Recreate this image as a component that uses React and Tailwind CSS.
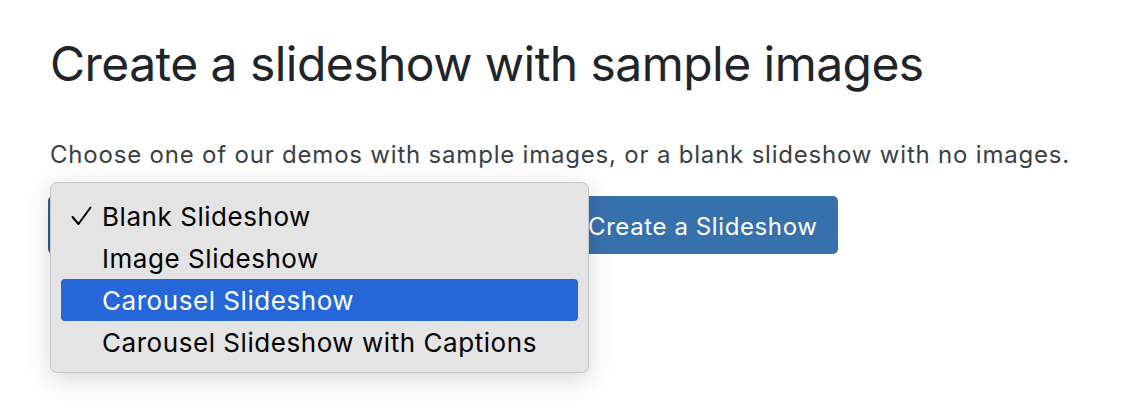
import React from "react";

const options = [
  "Blank Slideshow",
  "Image Slideshow",
  "Carousel Slideshow",
  "Carousel Slideshow with Captions",
];

const App = () => {
  return (
    <div
      className="w-[1146px] h-[412px] bg-white overflow-hidden px-[50px] pt-[34px] text-[#212529]"
      style={{ fontFamily: "Inter, 'Noto Sans', sans-serif" }}
    >
      <h1 className="text-[48px] leading-[60px] font-normal tracking-[-0.55px]">
        Create a slideshow with sample images
      </h1>
      <p className="mt-[45px] text-[24px] leading-[32px] tracking-[0.8px] text-[#3a3f44]">
        Choose one of our demos with sample images, or a blank slideshow with no images.
      </p>

      <div className="relative mt-[25px] flex items-center">
        <div className="ml-[-2px] w-[519px] h-[58px] rounded-l-[5px] border-l-[2px] border-[#2f5f93] bg-white" />
        <button className="h-[58px] pl-[21px] pr-[21px] pt-[3px] rounded-[5px] bg-[#3771ad] text-white text-[24px] tracking-[0.6px]">
          Create a Slideshow
        </button>

        <div className="absolute left-[0px] top-[-14px] w-[539px] rounded-[7px] border border-[#c6c6c6] bg-[#e4e4e4] px-[10px] pt-[12px] pb-[9px] shadow-[0_6px_24px_rgba(0,0,0,0.16)]">
          {options.map((o, i) => (
            <div
              key={o}
              className={
                "flex items-center h-[42px] rounded-[4px] text-[26px] tracking-[0.55px] " +
                (i === 2 ? "bg-[#2567d9] text-white" : "text-black")
              }
            >
              <span className="w-[41px] pl-[10px] flex items-center">
                {i === 0 ? (
                  <svg width="21" height="20" viewBox="0 0 21 20" fill="none">
                    <path d="M1.5 11 L7.5 18 L19.5 1.5" stroke="black" strokeWidth="2" strokeLinecap="round" strokeLinejoin="round" />
                  </svg>
                ) : null}
              </span>
              <span>{o}</span>
            </div>
          ))}
        </div>
      </div>
    </div>
  );
};

export default App;
